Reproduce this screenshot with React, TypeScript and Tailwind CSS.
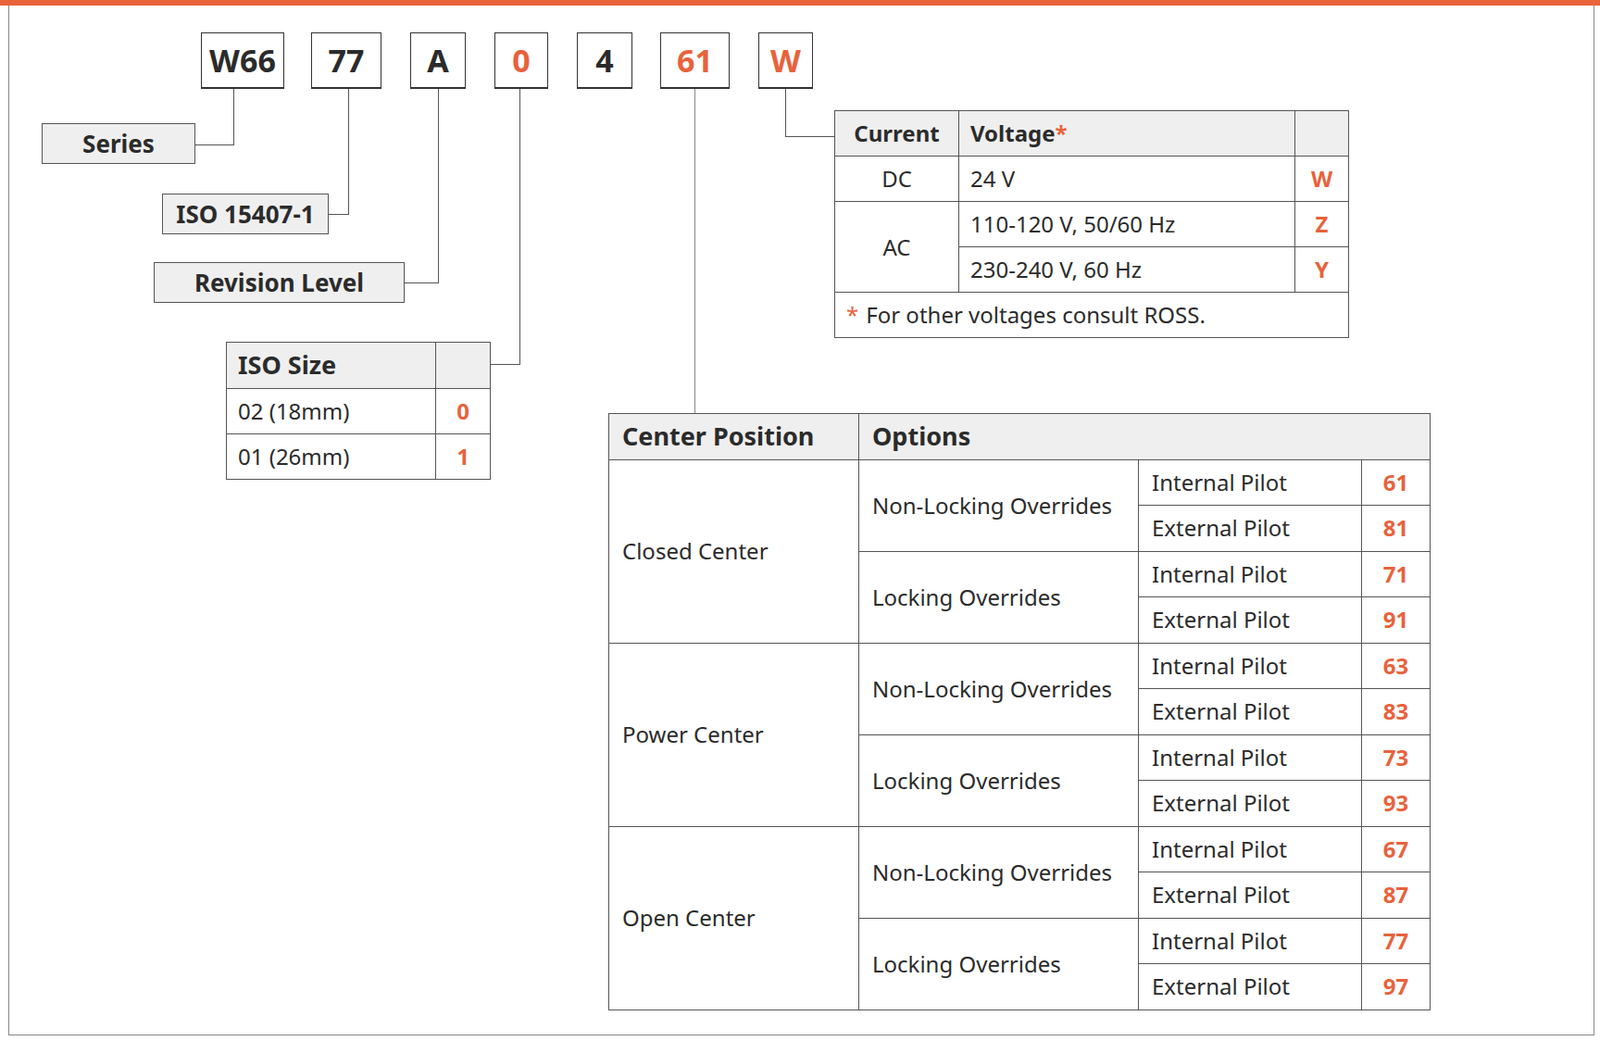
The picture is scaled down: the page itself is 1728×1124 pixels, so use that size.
import React from "react";

// ── Constants ───────────────────────────────────────────────────────────────
const FONT = "font-['Liberation_Sans_Narrow','DejaVu_Sans_Condensed',sans-serif]";
const ORANGE = "text-[#e8623c]";
const CELL = "border-r border-b border-[#555] flex items-center px-3 text-[#2b2b2b]";

const CODES = [
  { t: "W66", x: "left-[217px] w-[90px]", o: false },
  { t: "77", x: "left-[336px] w-[76px]", o: false },
  { t: "A", x: "left-[443px] w-[60px]", o: false },
  { t: "0", x: "left-[534px] w-[58px]", o: true },
  { t: "4", x: "left-[623px] w-[60px]", o: false },
  { t: "61", x: "left-[713px] w-[75px]", o: true },
  { t: "W", x: "left-[819px] w-[59px]", o: true },
];

const GROUPS = [
  { name: "Closed Center", codes: ["61", "81", "71", "91"] },
  { name: "Power Center", codes: ["63", "83", "73", "93"] },
  { name: "Open Center", codes: ["67", "87", "77", "97"] },
];

// ── Component ───────────────────────────────────────────────────────────────
export default function App() {
  return (
    <div className={`relative w-[1728px] h-[1124px] bg-white overflow-hidden ${FONT}`}>
      {/* frame */}
      <div className="absolute top-0 left-0 right-0 h-[6px] bg-[#e8623c]" />
      <div className="absolute top-[6px] left-[9px] h-[1112px] w-px bg-[#888]" />
      <div className="absolute top-[6px] left-[1721px] h-[1112px] w-px bg-[#888]" />
      <div className="absolute top-[1117px] left-[9px] w-[1713px] h-px bg-[#888]" />

      {/* code boxes */}
      {CODES.map((c) => (
        <div
          key={c.t}
          className={`absolute top-[35px] h-[61px] ${c.x} border border-[#333] border-b-2 flex items-center justify-center font-bold text-[34px] ${c.o ? ORANGE : "text-[#2b2b2b]"}`}
        >
          {c.t}
        </div>
      ))}

      {/* connectors */}
      <div className="absolute left-[252px] top-[96px] w-px h-[60px] bg-[#555]" />
      <div className="absolute left-[211px] top-[156px] w-[42px] h-px bg-[#555]" />
      <div className="absolute left-[376px] top-[96px] w-px h-[135px] bg-[#555]" />
      <div className="absolute left-[355px] top-[231px] w-[22px] h-px bg-[#555]" />
      <div className="absolute left-[473px] top-[96px] w-px h-[209px] bg-[#555]" />
      <div className="absolute left-[437px] top-[305px] w-[37px] h-px bg-[#555]" />
      <div className="absolute left-[561px] top-[96px] w-px h-[297px] bg-[#555]" />
      <div className="absolute left-[529px] top-[393px] w-[33px] h-px bg-[#555]" />
      <div className="absolute left-[750px] top-[96px] w-px h-[350px] bg-[#888]" />
      <div className="absolute left-[848px] top-[96px] w-px h-[51px] bg-[#555]" />
      <div className="absolute left-[848px] top-[147px] w-[53px] h-px bg-[#555]" />

      {/* labels */}
      <Label className="left-[45px] top-[133px] w-[166px] h-[44px]">Series</Label>
      <Label className="left-[175px] top-[209px] w-[180px] h-[44px]">ISO 15407-1</Label>
      <Label className="left-[166px] top-[283px] w-[271px] h-[44px]">Revision Level</Label>

      {/* ISO size */}
      <div className="absolute left-[244px] top-[369px] grid grid-cols-[226px_59px] grid-rows-[50px_49px_49px] border-l border-t border-[#555] text-[24px]">
        <div className={`${CELL} bg-[#efefef] font-bold text-[27px]`}>ISO Size</div>
        <div className={`${CELL} bg-[#efefef]`} />
        <div className={CELL}>02 (18mm)</div>
        <div className={`${CELL} justify-center font-bold ${ORANGE}`}>0</div>
        <div className={CELL}>01 (26mm)</div>
        <div className={`${CELL} justify-center font-bold ${ORANGE}`}>1</div>
      </div>

      {/* voltage */}
      <div className="absolute left-[901px] top-[119px] grid grid-cols-[134px_363px_58px] grid-rows-[49px_49px_49px_49px_49px] border-l border-t border-[#555] text-[24px]">
        <div className={`${CELL} bg-[#efefef] font-bold justify-center`}>Current</div>
        <div className={`${CELL} bg-[#efefef] font-bold`}>
          Voltage<span className={ORANGE}>*</span>
        </div>
        <div className={`${CELL} bg-[#efefef]`} />
        <div className={`${CELL} justify-center`}>DC</div>
        <div className={CELL}>24 V</div>
        <div className={`${CELL} justify-center font-bold ${ORANGE}`}>W</div>
        <div className={`${CELL} justify-center row-span-2`}>AC</div>
        <div className={CELL}>110-120 V, 50/60 Hz</div>
        <div className={`${CELL} justify-center font-bold ${ORANGE}`}>Z</div>
        <div className={CELL}>230-240 V, 60 Hz</div>
        <div className={`${CELL} justify-center font-bold ${ORANGE}`}>Y</div>
        <div className={`${CELL} col-span-3 px-2`}>
          <span className={`${ORANGE} mr-2`}>*</span>For other voltages consult ROSS.
        </div>
      </div>

      {/* center position */}
      <div className="absolute left-[657px] top-[446px] grid grid-cols-[270px_302px_241px_74px] auto-rows-[49.5px] border-l border-t border-[#555] text-[24px]">
        <div className={`${CELL} bg-[#efefef] font-bold text-[27px] px-3.5`}>Center Position</div>
        <div className={`${CELL} bg-[#efefef] font-bold text-[27px] col-span-3 px-3.5`}>Options</div>
        {GROUPS.map((g) => (
          <React.Fragment key={g.name}>
            <div className={`${CELL} row-span-4 px-3.5`}>{g.name}</div>
            {["Non-Locking Overrides", "Locking Overrides"].map((o, oi) => (
              <React.Fragment key={o}>
                <div className={`${CELL} row-span-2 px-3.5`}>{o}</div>
                {["Internal Pilot", "External Pilot"].map((p, pi) => (
                  <React.Fragment key={p}>
                    <div className={`${CELL} px-3.5`}>{p}</div>
                    <div className={`${CELL} justify-center font-bold ${ORANGE}`}>
                      {g.codes[oi * 2 + pi]}
                    </div>
                  </React.Fragment>
                ))}
              </React.Fragment>
            ))}
          </React.Fragment>
        ))}
      </div>
    </div>
  );
}

function Label({ className, children }: { className: string; children: React.ReactNode }) {
  return (
    <div
      className={`absolute ${className} bg-[#efefef] border border-[#555] flex items-center justify-center font-bold text-[26px] text-[#2b2b2b]`}
    >
      {children}
    </div>
  );
}
